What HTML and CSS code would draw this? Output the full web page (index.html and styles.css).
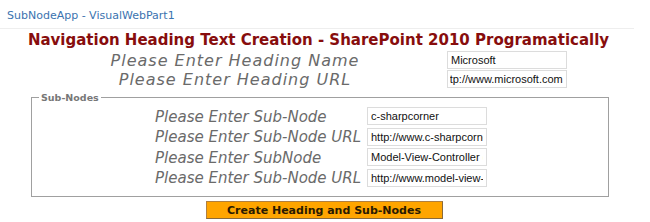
FILE: index.html
```html
<!DOCTYPE html>
<html lang="en">
<head>
    <meta charset="UTF-8">
    <title>SubNodeApp - VisualWebPart1</title>
    <link rel="stylesheet" href="styles.css">
</head>
<body>
<div class="crumb">SubNodeApp - VisualWebPart1</div>

<div class="part">
    <h2 class="title">Navigation Heading Text Creation - SharePoint 2010 Programatically</h2>

    <table class="heading-table">
        <tr>
            <td class="label">Please Enter Heading Name</td>
            <td><input type="text" value="Microsoft"></td>
        </tr>
        <tr>
            <td class="label">Please Enter Heading URL</td>
            <td><input type="text" class="scrolled" value="http://www.microsoft.com"></td>
        </tr>
    </table>

    <fieldset class="sub-nodes">
        <legend>Sub-Nodes</legend>
        <table class="node-table">
            <tr>
                <td class="label">Please Enter Sub-Node</td>
                <td><input type="text" value="c-sharpcorner"></td>
            </tr>
            <tr>
                <td class="label">Please Enter Sub-Node URL</td>
                <td><input type="text" value="http://www.c-sharpcorner.com"></td>
            </tr>
            <tr>
                <td class="label">Please Enter SubNode</td>
                <td><input type="text" value="Model-View-Controller (MVC)"></td>
            </tr>
            <tr>
                <td class="label">Please Enter Sub-Node URL</td>
                <td><input type="text" value="http://www.model-view-controller.com"></td>
            </tr>
        </table>
    </fieldset>

    <div class="actions">
        <button>Create Heading and Sub-Nodes</button>
    </div>
</div>
</body>
</html>
```

FILE: styles.css
```css
* {
    margin: 0;
    padding: 0;
    box-sizing: border-box;
}

body {
    background: #fff;
    font-family: "DejaVu Sans", Verdana, sans-serif;
    width: 650px;
    height: 222px;
    overflow: hidden;
}

.crumb {
    width: 634px;
    padding: 9px 0 6px 7px;
    font-size: 11px;
    color: #3b73af;
    border-bottom: 1px solid #eeeeee;
}

.part {
    width: 637px;
}

.title {
    margin-top: 2px;
    text-align: center;
    font-size: 15px;
    font-weight: bold;
    color: #870d0d;
    line-height: 18px;
}

table {
    border-collapse: collapse;
}

td {
    padding: 0;
}

.label {
    font-style: italic;
    font-size: 15px;
    color: #6a6a6a;
    line-height: 19px;
}

.heading-table {
    margin: 2px 0 0 23px;
}

.heading-table .label {
    text-align: center;
    width: 424px;
    font-size: 16px;
    letter-spacing: 1px;
}

input {
    display: block;
    width: 120px;
    height: 18px;
    padding: 0 3px;
    border: 1px solid #dcdcdc;
    font-family: "Liberation Sans", Arial, sans-serif;
    font-size: 11px;
    color: #111;
    background: #fff;
    outline: none;
}

.heading-table input {
    margin-bottom: 1px;
}

.scrolled {
    padding: 0 0 0 2px;
    text-indent: -9.5px;
}

.sub-nodes {
    margin: 3px 0 0 31px;
    width: 578px;
    height: 105px;
    border: 1px solid #a0a0a0;
    border-radius: 0;
    padding: 0;
}

.sub-nodes legend {
    margin-left: 7px;
    padding: 0 2px;
    font-size: 9.5px;
    font-weight: bold;
    color: #777;
}

.node-table {
    margin: 4px 0 0 123px;
}

.node-table .label {
    width: 212px;
}

.node-table input {
    margin-bottom: 2.5px;
}

.actions {
    margin-top: 4px;
    padding-left: 11px;
    display: flex;
    justify-content: center;
}

button {
    width: 237px;
    height: 18px;
    background: #ffa500;
    border: 1px solid #b08040;
    border-right-color: #8a6a3a;
    border-bottom-color: #8a6a3a;
    font-family: "DejaVu Sans", Verdana, sans-serif;
    font-size: 11px;
    font-weight: bold;
    color: #2a1a00;
}
```
